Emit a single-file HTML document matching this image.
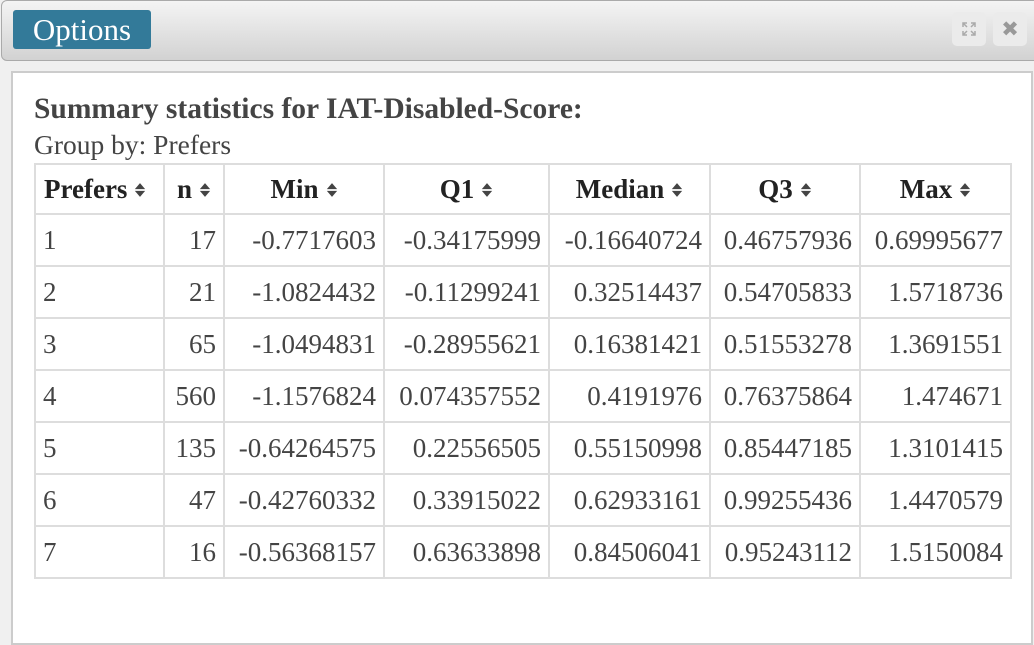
<!DOCTYPE html>
<html><head><style>
body{margin:0;width:1034px;height:634px;background:#f0f0f0;overflow:hidden;font-family:"Liberation Serif",serif;position:relative}
.bar{position:absolute;left:1px;top:0;width:1040px;height:59px;border:1px solid #aaa;border-radius:6px;background:linear-gradient(#f4f4f4,#d2d2d2)}
.opt{position:absolute;left:13px;top:10px;width:138px;height:39px;background:#337a99;border-radius:3px;color:#fff;font-size:31px;line-height:39px;text-align:center}
.ib{position:absolute;top:12px;width:34px;height:34px;border-radius:5px;background:#ebebeb;color:#999;text-align:center;line-height:34px;font-family:"DejaVu Sans",sans-serif}
.panel{position:absolute;left:11px;top:71px;width:1018px;height:570px;background:#fff;border:2px solid #ccc}
h1{position:absolute;left:21px;top:20px;margin:0;font-size:29.5px;font-weight:bold;color:#444;white-space:nowrap}
.g{position:absolute;left:21px;top:56px;font-size:27.5px;color:#444}
table{position:absolute;left:21px;top:90px;border-collapse:collapse;font-size:27px;color:#444;table-layout:fixed;width:976px}
td,th{border:2px solid #ddd;padding:0 8px;height:48px;white-space:nowrap;overflow:visible}
tr:not(:first-child) td{height:50px}
th{color:#222;text-align:center;font-size:27px}
td{text-align:right;padding:0 7px 0 4px}
td:first-child{text-align:left;padding-left:7px}
th:first-child{text-align:left}
svg{vertical-align:0px;margin-left:7px}
</style></head><body>
<div class="bar"></div>
<div class="opt">Options</div>
<div class="ib" style="left:952px">
<svg width="16" height="16" viewBox="0 0 16 16" style="margin:9px 0 0 0;vertical-align:top" fill="none" stroke="#aaa" stroke-width="1.5"><path d="M2 6V2h4M2 2l4 4M14 6V2h-4M14 2l-4 4M2 10v4h4M2 14l4-4M14 10v4h-4M14 14l-4-4"/></svg></div>
<div class="ib" style="left:993px;font-size:21px;font-weight:bold">✖</div>
<div class="panel">
<h1>Summary statistics for IAT-Disabled-Score:</h1>
<div class="g">Group by: Prefers</div>
<table>
<colgroup><col style="width:129px"><col style="width:60px"><col style="width:160px"><col style="width:165px"><col style="width:161px"><col style="width:150px"><col style="width:151px"></colgroup>
<tr><th>Prefers<svg width="12" height="16" viewBox="0 0 14 18"><path d="M7 1L13 8H1zM7 17L13 10H1z" fill="#444"/></svg></th><th>n<svg width="12" height="16" viewBox="0 0 14 18"><path d="M7 1L13 8H1zM7 17L13 10H1z" fill="#444"/></svg></th><th>Min<svg width="12" height="16" viewBox="0 0 14 18"><path d="M7 1L13 8H1zM7 17L13 10H1z" fill="#444"/></svg></th><th>Q1<svg width="12" height="16" viewBox="0 0 14 18"><path d="M7 1L13 8H1zM7 17L13 10H1z" fill="#444"/></svg></th><th>Median<svg width="12" height="16" viewBox="0 0 14 18"><path d="M7 1L13 8H1zM7 17L13 10H1z" fill="#444"/></svg></th><th>Q3<svg width="12" height="16" viewBox="0 0 14 18"><path d="M7 1L13 8H1zM7 17L13 10H1z" fill="#444"/></svg></th><th>Max<svg width="12" height="16" viewBox="0 0 14 18"><path d="M7 1L13 8H1zM7 17L13 10H1z" fill="#444"/></svg></th></tr>
<tr><td>1</td><td>17</td><td>-0.7717603</td><td>-0.34175999</td><td>-0.16640724</td><td>0.46757936</td><td>0.69995677</td></tr>
<tr><td>2</td><td>21</td><td>-1.0824432</td><td>-0.11299241</td><td>0.32514437</td><td>0.54705833</td><td>1.5718736</td></tr>
<tr><td>3</td><td>65</td><td>-1.0494831</td><td>-0.28955621</td><td>0.16381421</td><td>0.51553278</td><td>1.3691551</td></tr>
<tr><td>4</td><td>560</td><td>-1.1576824</td><td>0.074357552</td><td>0.4191976</td><td>0.76375864</td><td>1.474671</td></tr>
<tr><td>5</td><td>135</td><td>-0.64264575</td><td>0.22556505</td><td>0.55150998</td><td>0.85447185</td><td>1.3101415</td></tr>
<tr><td>6</td><td>47</td><td>-0.42760332</td><td>0.33915022</td><td>0.62933161</td><td>0.99255436</td><td>1.4470579</td></tr>
<tr><td>7</td><td>16</td><td>-0.56368157</td><td>0.63633898</td><td>0.84506041</td><td>0.95243112</td><td>1.5150084</td></tr>
</table>
</div>
</body></html>
